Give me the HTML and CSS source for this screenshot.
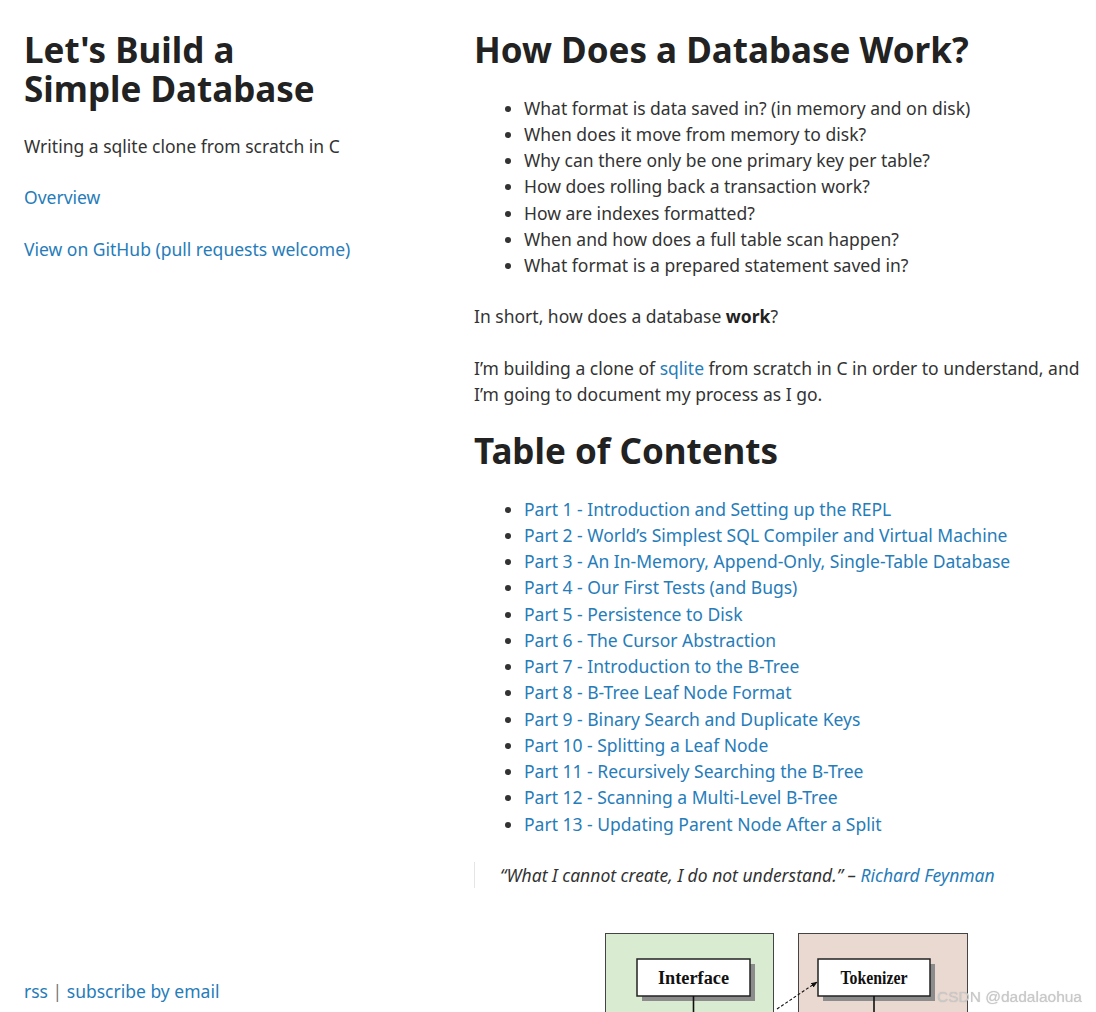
FILE: index.html
```html
<!DOCTYPE html>
<html lang="en">
<head>
<meta charset="utf-8">
<title>Let's Build a Simple Database</title>
<link rel="stylesheet" href="styles.css">
</head>
<body>
<div class="wrapper">
  <header class="sidebar">
    <h1 class="title">Let's Build a Simple Database</h1>
    <p>Writing a sqlite clone from scratch in C</p>
    <p><a href="#">Overview</a></p>
    <p><a href="#">View on GitHub (pull requests welcome)</a></p>
    <div class="sidebar-foot"><a href="#">rss</a> <span class="sep">|</span> <a href="#">subscribe by email</a></div>
  </header>
  <main class="content">
    <h1>How Does a Database Work?</h1>
    <ul>
      <li>What format is data saved in? (in memory and on disk)</li>
      <li>When does it move from memory to disk?</li>
      <li>Why can there only be one primary key per table?</li>
      <li>How does rolling back a transaction work?</li>
      <li>How are indexes formatted?</li>
      <li>When and how does a full table scan happen?</li>
      <li>What format is a prepared statement saved in?</li>
    </ul>
    <p>In short, how does a database <strong>work</strong>?</p>
    <p>I’m building a clone of <a href="#">sqlite</a> from scratch in C in order to understand, and I’m going to document my process as I go.</p>
    <h1>Table of Contents</h1>
    <ul>
      <li><a href="#">Part 1 - Introduction and Setting up the REPL</a></li>
      <li><a href="#">Part 2 - World’s Simplest SQL Compiler and Virtual Machine</a></li>
      <li><a href="#">Part 3 - An In-Memory, Append-Only, Single-Table Database</a></li>
      <li><a href="#">Part 4 - Our First Tests (and Bugs)</a></li>
      <li><a href="#">Part 5 - Persistence to Disk</a></li>
      <li><a href="#">Part 6 - The Cursor Abstraction</a></li>
      <li><a href="#">Part 7 - Introduction to the B-Tree</a></li>
      <li><a href="#">Part 8 - B-Tree Leaf Node Format</a></li>
      <li><a href="#">Part 9 - Binary Search and Duplicate Keys</a></li>
      <li><a href="#">Part 10 - Splitting a Leaf Node</a></li>
      <li><a href="#">Part 11 - Recursively Searching the B-Tree</a></li>
      <li><a href="#">Part 12 - Scanning a Multi-Level B-Tree</a></li>
      <li><a href="#">Part 13 - Updating Parent Node After a Split</a></li>
    </ul>
    <blockquote><p>“What I cannot create, I do not understand.” – <a href="#">Richard Feynman</a></p></blockquote>
    <p class="figure">
      <svg class="arch" width="363" height="420" viewBox="0 0 363 420" xmlns="http://www.w3.org/2000/svg">
        <defs>
          <marker id="ah" viewBox="0 0 10 10" refX="9" refY="5" markerWidth="6" markerHeight="6" orient="auto">
            <path d="M0 1 L10 5 L0 9 Z" fill="#111"/>
          </marker>
        </defs>
        <rect x="0.5" y="20.5" width="168" height="390" fill="#d9ecd2" stroke="#444" stroke-width="1"/>
        <rect x="193.5" y="20.5" width="169" height="390" fill="#e9d9d0" stroke="#444" stroke-width="1"/>
        <g font-family="'Liberation Serif', serif" font-weight="700" font-size="18.5" text-anchor="middle" fill="#111">
          <rect x="37" y="51" width="113" height="37" fill="#8c8c8c"/>
          <rect x="32" y="46" width="113" height="37" fill="#fff" stroke="#222" stroke-width="1.5"/>
          <text x="88.5" y="70.5" textLength="71" lengthAdjust="spacingAndGlyphs">Interface</text>
          <rect x="218" y="51" width="112" height="37" fill="#8c8c8c"/>
          <rect x="213" y="46" width="112" height="37" fill="#fff" stroke="#222" stroke-width="1.5"/>
          <text x="269" y="70.5" textLength="67" lengthAdjust="spacingAndGlyphs">Tokenizer</text>
          <line x1="88.5" y1="83" x2="88.5" y2="136" stroke="#111" stroke-width="1.6" marker-end="url(#ah)"/>
          <line x1="269" y1="83" x2="269" y2="136" stroke="#111" stroke-width="1.6" marker-end="url(#ah)"/>
          <line x1="172" y1="96" x2="212" y2="69" stroke="#111" stroke-width="1.1" stroke-dasharray="3 2" marker-end="url(#ah)"/>
          <rect x="37" y="143" width="113" height="52" fill="#8c8c8c"/>
          <rect x="32" y="138" width="113" height="52" fill="#fff" stroke="#222" stroke-width="1.5"/>
          <text x="88.5" y="160" font-size="16">SQL Command</text>
          <text x="88.5" y="180" font-size="16">Processor</text>
          <rect x="218" y="143" width="112" height="37" fill="#8c8c8c"/>
          <rect x="213" y="138" width="112" height="37" fill="#fff" stroke="#222" stroke-width="1.5"/>
          <text x="269" y="162" font-size="16">Parser</text>
          <line x1="88.5" y1="190" x2="88.5" y2="246" stroke="#111" stroke-width="1.6" marker-end="url(#ah)"/>
          <line x1="269" y1="175" x2="269" y2="246" stroke="#111" stroke-width="1.6" marker-end="url(#ah)"/>
          <rect x="37" y="253" width="113" height="52" fill="#8c8c8c"/>
          <rect x="32" y="248" width="113" height="52" fill="#fff" stroke="#222" stroke-width="1.5"/>
          <text x="88.5" y="270" font-size="16">Virtual</text>
          <text x="88.5" y="290" font-size="16">Machine</text>
          <rect x="218" y="253" width="112" height="52" fill="#8c8c8c"/>
          <rect x="213" y="248" width="112" height="52" fill="#fff" stroke="#222" stroke-width="1.5"/>
          <text x="269" y="270" font-size="16">Code</text>
          <text x="269" y="290" font-size="16">Generator</text>
        </g>
      </svg>
    </p>
  </main>
</div>
<div class="watermark">CSDN @dadalaohua</div>
</body>
</html>
```
FILE: styles.css
```css
html {
  overflow-x: hidden;
}

body {
  margin: 0;
  font-family: "Noto Sans", "Open Sans", sans-serif;
  font-size: 17.5px;
  line-height: 26.25px;
  color: #333;
  background: #fff;
}

a {
  color: #267cb9;
  text-decoration: none;
}

h1 {
  margin: 0 0 25px;
  font-size: 35px;
  line-height: 38.5px;
  font-weight: 700;
  color: #222;
}

p {
  margin: 0 0 25px;
}

strong {
  color: #222;
  font-weight: 700;
}

.wrapper {
  display: flex;
  padding: 31px 0 0 24px;
}

.sidebar {
  flex: 0 0 450px;
  height: calc(100vh - 39px);
  display: flex;
  flex-direction: column;
  box-sizing: border-box;
  padding-right: 118px;
}

.sidebar-foot {
  margin-top: auto;
}

.sep {
  color: #777;
}

.content {
  flex: 0 0 625px;
  width: 625px;
}

ul {
  margin: 0 0 25px;
  padding-left: 50px;
}

blockquote {
  margin: 0 0 25px;
  padding: 0 0 0 25px;
  border-left: 1px solid #e5e5e5;
  font-style: italic;
  color: #333;
}

blockquote p {
  margin: 0;
}

.figure {
  text-align: center;
  line-height: 0;
}

.arch {
  display: inline-block;
}

.watermark {
  position: fixed;
  right: 14px;
  bottom: 5px;
  font-family: "Liberation Sans", Arial, sans-serif;
  font-size: 15.5px;
  line-height: 20px;
  color: #c9c9c9;
  text-shadow: 0 0 1px rgba(120, 120, 120, 0.35);
}
```
